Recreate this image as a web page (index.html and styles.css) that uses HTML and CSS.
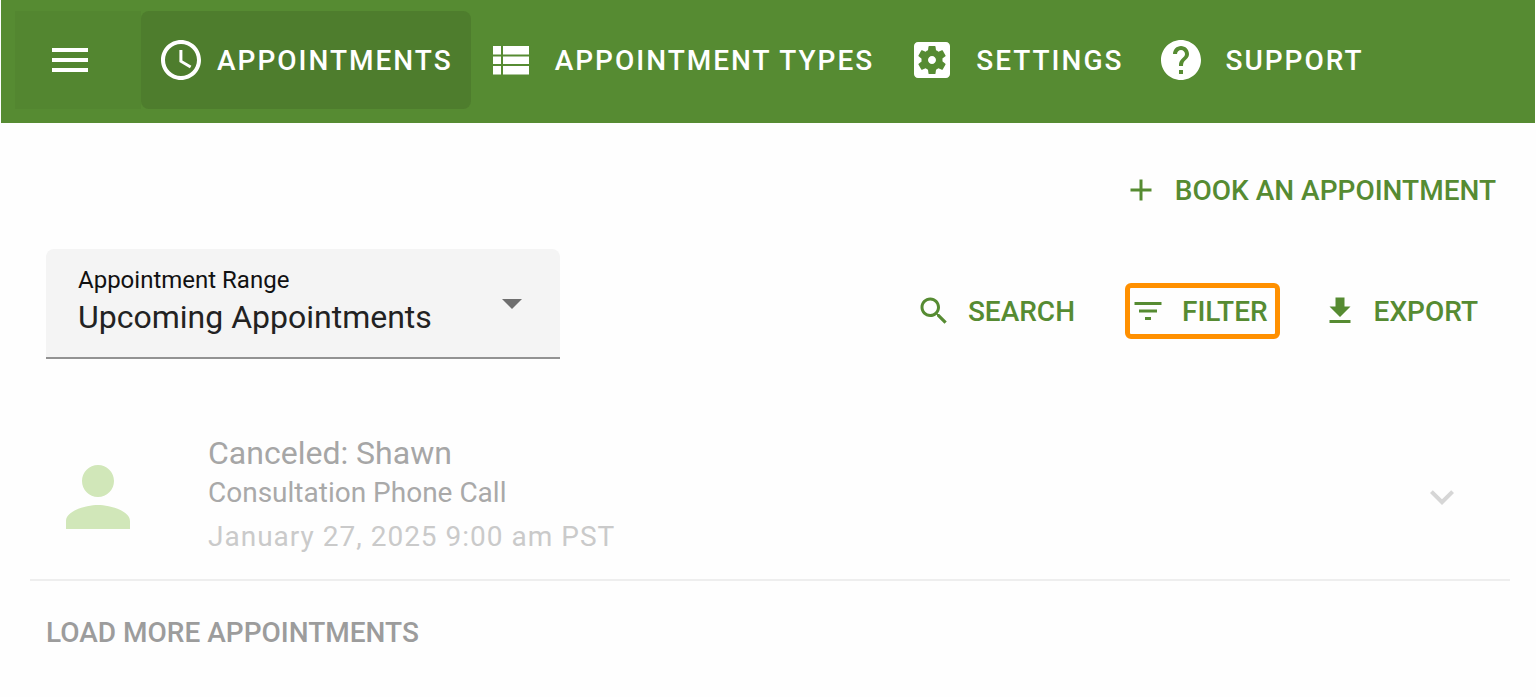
FILE: index.html
```html
<!DOCTYPE html>
<html lang="en">
<head>
    <meta charset="UTF-8">
    <meta name="viewport" content="width=device-width, initial-scale=1.0">
    <title>Appointments</title>
    <link rel="stylesheet" href="styles.css">
</head>
<body>
    <header class="topbar">
        <button type="button" class="menu-button" aria-label="Menu">
            <svg class="icon" viewBox="0 0 24 24"><path d="M3 18h18v-2H3v2zm0-5h18v-2H3v2zm0-7v2h18V6H3z"/></svg>
        </button>
        <nav class="nav">
            <a href="#appointments" class="nav-link active">
                <svg class="icon" viewBox="0 0 24 24"><path d="M11.99 2C6.47 2 2 6.48 2 12s4.47 10 9.99 10C17.52 22 22 17.52 22 12S17.52 2 11.99 2zM12 20c-4.42 0-8-3.58-8-8s3.58-8 8-8 8 3.58 8 8-3.58 8-8 8zm-.8-13h1.5v5.2l4.5 2.67-.75 1.23L11.2 13z"/></svg>
                <span>APPOINTMENTS</span>
            </a>
            <a href="#types" class="nav-link">
                <svg class="icon" viewBox="0 0 24 24"><path d="M3 14h4v-3.7H3V14zm0 5.2h4v-4.2H3v4.2zM3 9.2h4V5H3v4.2zm5 4.8h13v-3.7H8V14zm0 5.2h13v-4.2H8v4.2zM8 5v4.2h13V5H8z"/></svg>
                <span>APPOINTMENT TYPES</span>
            </a>
            <a href="#settings" class="nav-link">
                <svg class="icon" viewBox="0 0 24 24"><path d="M12 10c-1.1 0-2 .9-2 2s.9 2 2 2 2-.9 2-2-.9-2-2-2zm7-7H5c-1.11 0-2 .9-2 2v14c0 1.1.89 2 2 2h14c1.11 0 2-.9 2-2V5c0-1.1-.89-2-2-2zm-1.75 9c0 .23-.02.46-.05.68l1.48 1.16c.13.11.17.3.08.45l-1.4 2.42c-.09.15-.27.21-.43.15l-1.74-.7c-.36.28-.76.51-1.18.69l-.26 1.85c-.03.17-.18.3-.35.3h-2.8c-.17 0-.32-.13-.35-.29l-.26-1.85c-.43-.18-.82-.41-1.18-.69l-1.74.7c-.16.06-.34 0-.43-.15l-1.4-2.42c-.09-.15-.05-.34.08-.45l1.48-1.16c-.03-.23-.05-.46-.05-.69 0-.23.02-.46.05-.68l-1.48-1.16c-.13-.11-.17-.3-.08-.45l1.4-2.42c.09-.15.27-.21.43-.15l1.74.7c.36-.28.76-.51 1.18-.69l.26-1.85c.03-.17.18-.3.35-.3h2.8c.17 0 .32.13.35.29l.26 1.85c.43.18.82.41 1.18.69l1.74-.7c.16-.06.34 0 .43.15l1.4 2.42c.09.15.05.34-.08.45l-1.48 1.16c.03.23.05.46.05.69z"/></svg>
                <span>SETTINGS</span>
            </a>
            <a href="#support" class="nav-link">
                <svg class="icon" viewBox="0 0 24 24"><path d="M12 2C6.48 2 2 6.48 2 12s4.48 10 10 10 10-4.48 10-10S17.52 2 12 2zm1 17h-2v-2h2v2zm2.07-7.75l-.9.92C13.45 12.9 13 13.5 13 15h-2v-.5c0-1.1.45-2.1 1.17-2.83l1.24-1.26c.37-.36.59-.86.59-1.41 0-1.1-.9-2-2-2s-2 .9-2 2H8c0-2.21 1.79-4 4-4s4 1.79 4 4c0 .88-.36 1.68-.93 2.25z"/></svg>
                <span>SUPPORT</span>
            </a>
        </nav>
    </header>

    <main class="content">
        <div class="book-row">
            <button type="button" class="action">
                <svg class="icon-small" viewBox="0 0 24 24"><path d="M19 13h-6v6h-2v-6H5v-2h6V5h2v6h6v2z"/></svg>
                BOOK AN APPOINTMENT
            </button>
        </div>

        <div class="toolbar">
            <div class="range">
                <label for="range">Appointment Range</label>
                <select id="range" name="range">
                    <option>Upcoming Appointments</option>
                    <option>Past Appointments</option>
                </select>
                <svg class="arrow" viewBox="0 0 20 10"><path d="M0 0h20L10 10z"/></svg>
            </div>
            <div class="actions">
                <button type="button" class="action">
                    <svg class="icon-small" viewBox="0 0 24 24"><path d="M15.5 14h-.79l-.28-.27C15.41 12.59 16 11.11 16 9.5 16 5.91 13.09 3 9.5 3S3 5.91 3 9.5 5.91 16 9.5 16c1.61 0 3.09-.59 4.23-1.57l.27.28v.79l5 4.99L20.49 19l-4.99-5zm-6 0C7.01 14 5 11.99 5 9.5S7.01 5 9.5 5 14 7.01 14 9.5 11.99 14 9.5 14z"/></svg>
                    SEARCH
                </button>
                <button type="button" class="action highlighted">
                    <svg class="icon-small" viewBox="0 0 24 24"><path d="M10 18h4v-2h-4v2zM3 6v2h18V6H3zm3 7h12v-2H6v2z"/></svg>
                    FILTER
                </button>
                <button type="button" class="action">
                    <svg class="icon-small" viewBox="0 0 24 24"><path d="M19 9h-4V3H9v6H5l7 7 7-7zM5 18v2h14v-2H5z"/></svg>
                    EXPORT
                </button>
            </div>
        </div>

        <section class="list">
            <article class="appointment">
                <svg class="avatar" viewBox="0 0 24 24"><path d="M12 12c2.21 0 4-1.79 4-4s-1.79-4-4-4-4 1.79-4 4 1.79 4 4 4zm0 2c-2.67 0-8 1.34-8 4v2h16v-2c0-2.66-5.33-4-8-4z"/></svg>
                <div class="details">
                    <h2>Canceled: Shawn</h2>
                    <p class="type">Consultation Phone Call</p>
                    <p class="date">January 27, 2025 9:00 am PST</p>
                </div>
                <button type="button" class="expand" aria-label="Show details">
                    <svg class="icon" viewBox="0 0 24 24"><path d="M16.59 8.59L12 13.17 7.41 8.59 6 10l6 6 6-6z"/></svg>
                </button>
            </article>
        </section>

        <button type="button" class="load-more">LOAD MORE APPOINTMENTS</button>
    </main>
</body>
</html>
```
FILE: styles.css
```css
* {
    box-sizing: border-box;
}
body {
    font-family: Roboto, Arial, sans-serif;
    background: #fefefe;
    margin: 0;
}
button {
    font-family: inherit;
    background: none;
    border: none;
    padding: 0;
    cursor: pointer;
}
svg {
    fill: currentColor;
    flex-shrink: 0;
    display: block;
}
.icon {
    width: 48px;
    height: 48px;
}
.icon-small {
    width: 36px;
    height: 36px;
}

/* top bar */
.topbar {
    display: flex;
    margin: 0 1px;
    padding: 11px 14px 14px;
    background: #568b32;
    color: #fff;
}
.menu-button {
    width: 126px;
    padding-left: 31px;
    background: #538630;
    color: #fff;
}
.nav {
    display: flex;
}
.nav-link {
    display: flex;
    align-items: center;
    gap: 20px;
    height: 98px;
    padding: 0 18px 0 16px;
    border-radius: 8px;
    color: #fff;
    font-size: 28px;
    font-weight: 500;
    letter-spacing: 2px;
    text-decoration: none;
    white-space: nowrap;
}
.nav-link.active {
    gap: 12px;
    background: #4e7d2d;
}

/* page content */
.content {
    padding: 48px 26px 40px 30px;
}
.book-row {
    display: flex;
    justify-content: flex-end;
    padding-right: 14px;
}
.action {
    display: flex;
    align-items: center;
    gap: 16px;
    height: 38px;
    color: #568b32;
    font-size: 28px;
    font-weight: 500;
    white-space: nowrap;
}
.toolbar {
    display: flex;
    justify-content: space-between;
    margin-top: 40px;
    padding: 0 32px 0 16px;
}
.range {
    position: relative;
    width: 514px;
    height: 110px;
    background: #f4f4f4;
    border-bottom: 2px solid #929292;
    border-radius: 8px 8px 0 0;
}
.range label {
    position: absolute;
    top: 16px;
    left: 32px;
    color: #111;
    font-size: 24px;
    line-height: 30px;
}
.range select {
    width: 100%;
    height: 100%;
    padding: 27px 64px 0 32px;
    border: none;
    background: transparent;
    color: #222;
    font-family: inherit;
    font-size: 32px;
    appearance: none;
}
.range .arrow {
    position: absolute;
    top: 50px;
    right: 38px;
    width: 20px;
    height: 10px;
    color: #6f6f6f;
    pointer-events: none;
}
.actions {
    display: flex;
    align-items: center;
    gap: 50px;
    height: 124px;
    margin-bottom: -14px;
}
.action.highlighted {
    height: 56px;
    margin-right: -8px;
    padding-right: 7px;
    border: 5px solid #ff9000;
    border-radius: 6px;
}

/* appointment list */
.list {
    margin-top: 56px;
    border-bottom: 2px solid #eee;
}
.appointment {
    display: flex;
    align-items: center;
    padding: 18px 44px 18px 20px;
}
.avatar {
    width: 96px;
    height: 96px;
    margin-right: 62px;
    color: #d1e7b9;
}
.details {
    flex: 1;
}
.details h2,
.details p {
    margin: 0;
    font-weight: 400;
}
.details h2 {
    color: #a6a6a6;
    font-size: 32px;
    line-height: 40px;
}
.type {
    color: #a9a9a9;
    font-size: 28px;
    line-height: 40px;
}
.date {
    color: #cacaca;
    font-size: 28px;
    line-height: 48px;
    letter-spacing: 1px;
}
.expand {
    color: #d6d6d6;
}
.load-more {
    margin: 32px 0 0 16px;
    color: #9c9c9c;
    font-size: 28px;
    font-weight: 500;
    line-height: 40px;
}
```
